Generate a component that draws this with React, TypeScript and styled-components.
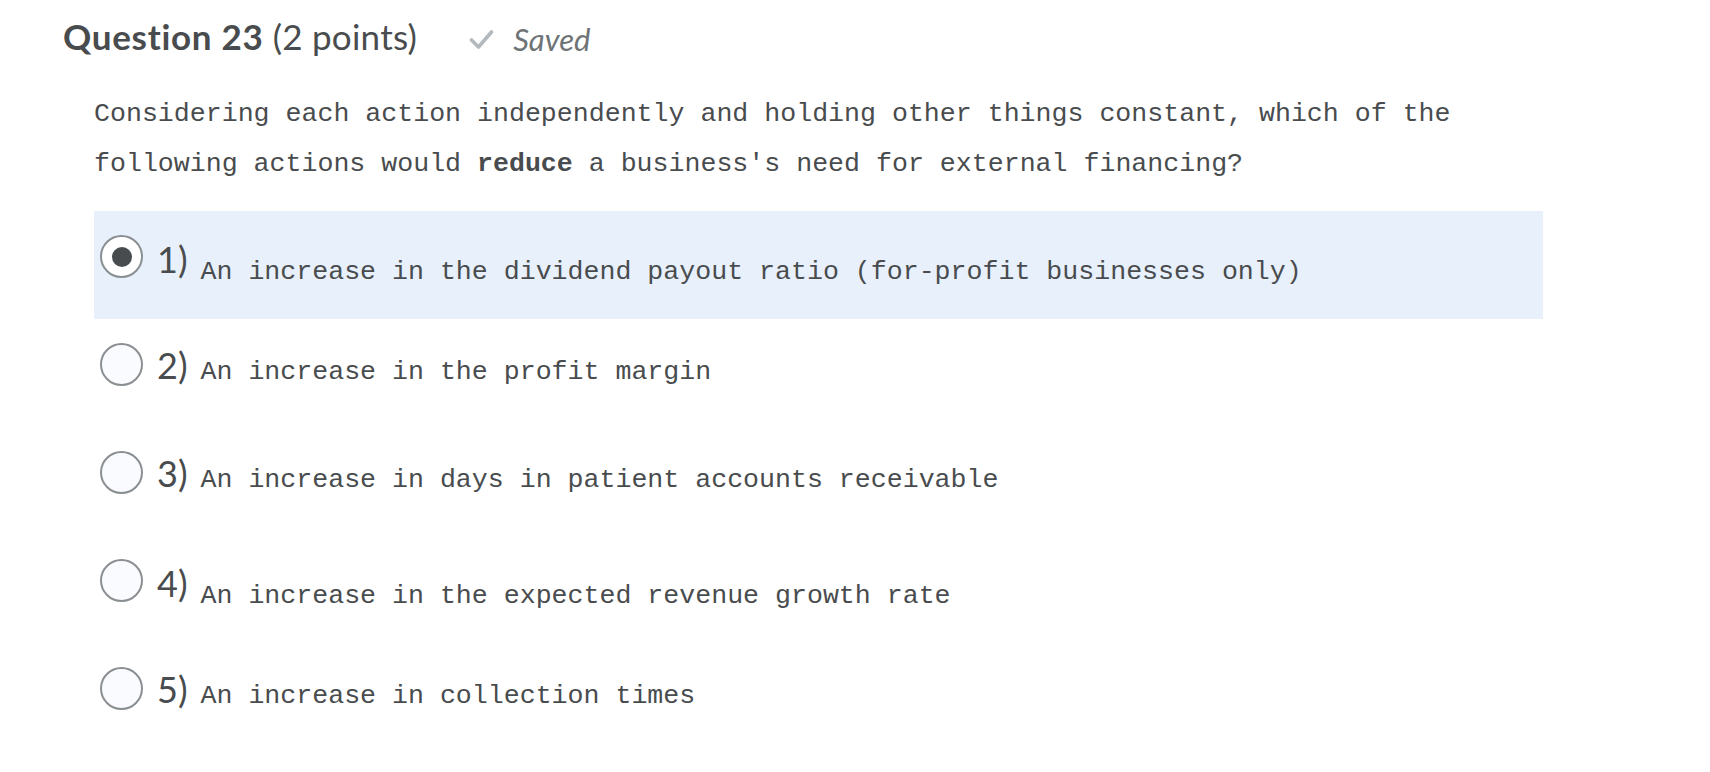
import React from "react";
import styled, { createGlobalStyle } from "styled-components";

const Global = createGlobalStyle`
  html, body { margin: 0; padding: 0; background: #ffffff; }
  body { font-family: Lato, "Noto Sans", sans-serif; color: #494c4e; }
  * { box-sizing: border-box; }
`;

const Page = styled.div`
  width: 1710px;
  height: 772px;
  padding: 16px 0 0 63px;
`;

const Header = styled.div`
  display: flex;
  align-items: baseline;
  height: 41px;
  line-height: 41px;
`;

const Title = styled.h2`
  margin: 0;
  font-family: Lato, sans-serif;
  font-size: 35px;
  font-weight: 700;
  color: #494c4e;
  letter-spacing: 0.7px;
`;

const Points = styled.span`
  font-weight: 400;
  letter-spacing: 0.25px;
`;

const SavedTag = styled.span`
  display: inline-flex;
  align-items: center;
  gap: 19px;
  margin-left: 52px;
  font-family: Lato, sans-serif;
  font-style: italic;
  font-size: 31px;
  color: #6e7376;
`;

const Body = styled.div`
  margin-left: 31px;
  width: 1449px;
`;

const Prompt = styled.p`
  margin: 32px 0 22px;
  font-family: "Liberation Mono", "Courier New", monospace;
  font-size: 26.6px;
  line-height: 50px;
  color: #494c4e;
  b { font-weight: 700; }
`;

const Options = styled.div`
  display: flex;
  flex-direction: column;
`;

const Row = styled.label<{ $selected?: boolean }>`
  display: flex;
  align-items: flex-start;
  height: 108px;
  padding: 24px 0 0 6px;
  background: ${(p) => (p.$selected ? "#e8f0fc" : "transparent")};
`;

const Radio = styled.span<{ $checked?: boolean }>`
  flex: none;
  width: 43px;
  height: 43px;
  border-radius: 50%;
  border: 2px solid #8a8f92;
  background: ${(p) => (p.$checked ? "#ffffff" : "#f9fbff")};
  display: flex;
  align-items: center;
  justify-content: center;
  &::after {
    content: "";
    display: ${(p) => (p.$checked ? "block" : "none")};
    width: 20px;
    height: 20px;
    border-radius: 50%;
    background: #494c4e;
  }
`;

const Label = styled.span<{ $sunk?: boolean }>`
  margin-left: 14px;
  margin-top: ${(p) => (p.$sunk ? "2px" : "0")};
  line-height: 45px;
  white-space: nowrap;
`;

const Num = styled.span`
  font-family: Lato, sans-serif;
  font-size: 36px;
  color: #494c4e;
`;

const OptText = styled.span<{ $sunk?: boolean }>`
  margin-left: 13px;
  font-family: "Liberation Mono", "Courier New", monospace;
  font-size: 26.6px;
  color: #494c4e;
  vertical-align: ${(p) => (p.$sunk ? "-6px" : "baseline")};
`;

const CheckIcon = () => (
  <svg width="25" height="21" viewBox="0 0 25 21" aria-hidden="true">
    <path
      d="M2.5 11 L9.5 18 L22.5 3"
      fill="none"
      stroke="#b4b9bd"
      strokeWidth="3.6"
      strokeLinecap="round"
      strokeLinejoin="round"
    />
  </svg>
);

const options = [
  { n: 1, text: "An increase in the dividend payout ratio (for-profit businesses only)", sunk: true },
  { n: 2, text: "An increase in the profit margin", sunk: false },
  { n: 3, text: "An increase in days in patient accounts receivable", sunk: false },
  { n: 4, text: "An increase in the expected revenue growth rate", sunk: true },
  { n: 5, text: "An increase in collection times", sunk: false },
];

export default function App() {
  const selected = 1;
  return (
    <Page>
      <Global />
      <Header>
        <Title>
          Question 23 <Points>(2 points)</Points>
        </Title>
        <SavedTag>
          <CheckIcon />
          Saved
        </SavedTag>
      </Header>
      <Body>
        <Prompt>
          Considering each action independently and holding other things constant, which of the
          following actions would <b>reduce</b> a business's need for external financing?
        </Prompt>
        <Options>
          {options.map((o) => (
            <Row key={o.n} $selected={o.n === selected}>
              <Radio $checked={o.n === selected} />
              <Label $sunk={o.sunk}>
                <Num>{o.n})</Num>
                <OptText $sunk={o.sunk}>{o.text}</OptText>
              </Label>
            </Row>
          ))}
        </Options>
      </Body>
    </Page>
  );
}
